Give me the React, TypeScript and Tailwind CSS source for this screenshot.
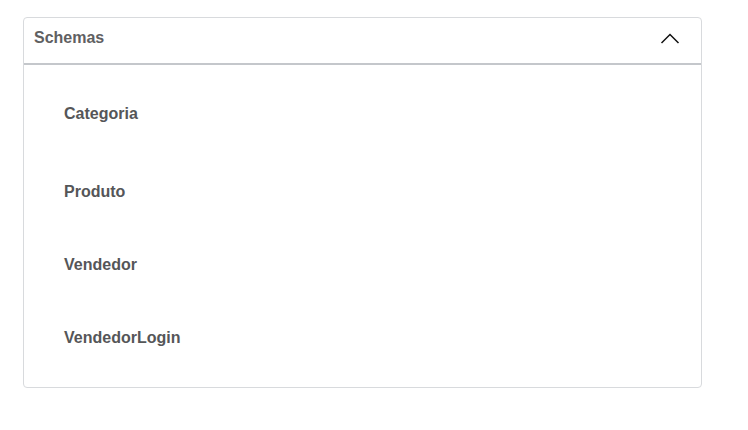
import React from 'react';

const schemas = [
  { name: 'Categoria', mt: 'mt-0' },
  { name: 'Produto', mt: 'mt-[58px]' },
  { name: 'Vendedor', mt: 'mt-[53px]' },
  { name: 'VendedorLogin', mt: 'mt-[53px]' },
];

export default function App() {
  return (
    <div className="w-[748px] h-[430px] bg-white pt-[17px] pl-[23px]" style={{ fontFamily: '"Liberation Sans", Arial, sans-serif' }}>
      <div className="w-[679px] h-[371px] border border-[#d8dadd] rounded-[4px] flex flex-col">
        <div className="h-[47px] flex items-center justify-between pl-[10px] pr-[21px] border-b-2 border-[#c4c7cb]">
          <span className="text-[16px] leading-[20px] font-bold text-[#5f6062] -mt-[5px]">Schemas</span>
          <svg width="20" height="11" viewBox="0 0 20 11" className="-mt-[4px]">
            <polyline points="1.5,10 10,1.5 18.5,10" fill="none" stroke="#111" strokeWidth="1.5" />
          </svg>
        </div>
        <div className="flex flex-col pl-[40px] pt-[39px]">
          {schemas.map((s) => (
            <div key={s.name} className={`${s.mt} h-[20px] leading-[20px] text-[16px] font-bold text-[#555658]`}>
              {s.name}
            </div>
          ))}
        </div>
      </div>
    </div>
  );
}
